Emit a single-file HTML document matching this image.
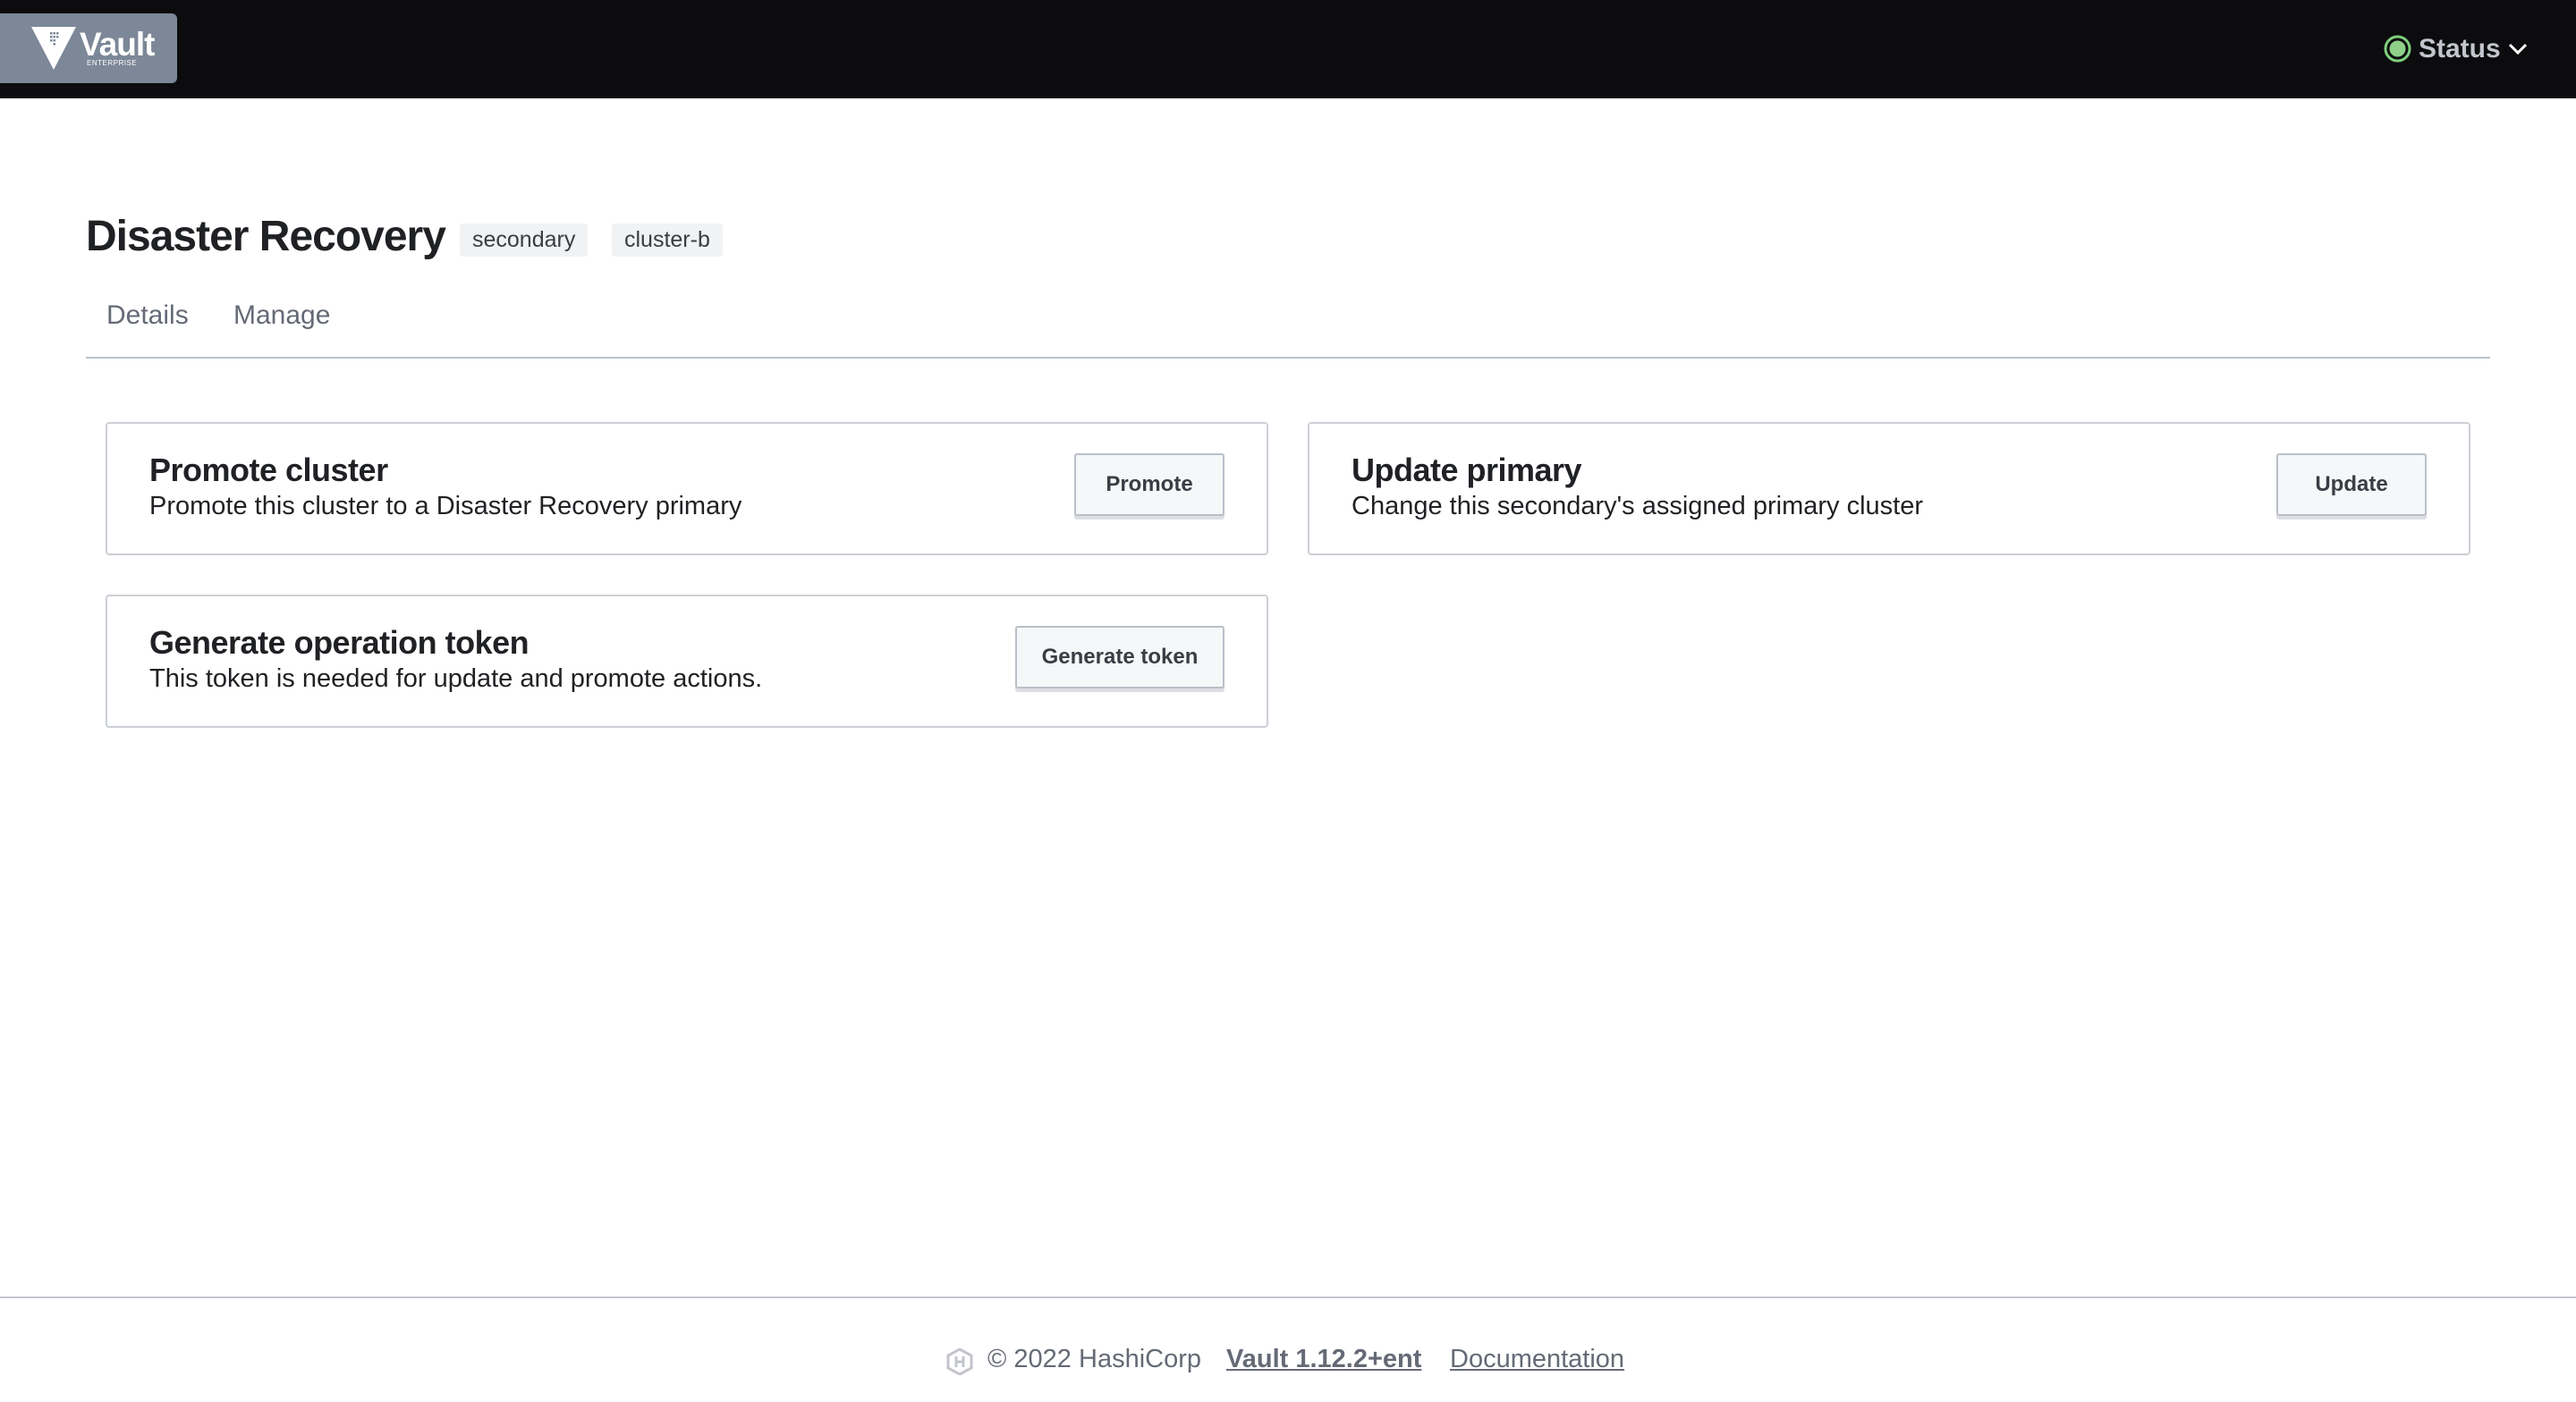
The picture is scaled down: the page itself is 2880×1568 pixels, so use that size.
<!DOCTYPE html>
<html><head><meta charset="utf-8"><style>
*{box-sizing:border-box;margin:0;padding:0}
html,body{width:2880px;height:1568px;background:#fff;font-family:"Liberation Sans",sans-serif;overflow:hidden;position:relative;color:#1f2124}
.hdr{position:absolute;left:0;top:0;width:2880px;height:110px;background:#0c0c0e}
.logo{position:absolute;left:0;top:15px;width:198px;height:78px;background:#7c8797;border-radius:0 6px 6px 0}
.abs{position:absolute;white-space:nowrap}
.badge{position:absolute;top:250px;height:37px;background:#f1f2f3;border-radius:4px;font-size:25px;color:#3b3d45;line-height:37px;padding:0 14px}
.card{position:absolute;width:1300px;height:149px;border:2px solid #ccd0d6;border-radius:4px;background:#fff}
.card h3{position:absolute;left:47px;top:31px;font-size:36px;font-weight:bold;letter-spacing:-0.5px}
.card p{position:absolute;left:47px;top:76px;font-size:29px;color:#1f2124}
.btn{position:absolute;top:33px;height:70px;border:2px solid #babfc8;border-radius:3px;background:#f6f7f8;font-size:24px;font-weight:bold;color:#3b3d45;line-height:66px;text-align:center;box-shadow:0 4px 0 #dcdee2}
</style></head><body>
<div class="hdr">
 <div class="logo">
  <svg class="abs" style="left:35px;top:15px" width="50" height="48" viewBox="0 0 50 48"><polygon points="0,0 50,0 25,48" fill="#fff"/><g fill="#7c8797"><rect x="21" y="6" width="2.5" height="2.5"/><rect x="24.5" y="6" width="2.5" height="2.5"/><rect x="28" y="6" width="2.5" height="2.5"/><rect x="21" y="10" width="2.5" height="2.5"/><rect x="24.5" y="10" width="2.5" height="2.5"/><rect x="28" y="10" width="2.5" height="2.5"/><rect x="21" y="14" width="2.5" height="2.5"/><rect x="24.5" y="14" width="2.5" height="2.5"/><rect x="24.5" y="18" width="2.5" height="2.5"/></g></svg>
  <div class="abs" style="left:89px;top:14px;font-size:37px;font-weight:bold;color:#fff;letter-spacing:-1px">Vault</div>
  <div class="abs" style="left:97px;top:51px;font-size:8px;color:#fff;letter-spacing:0.5px">ENTERPRISE</div>
 </div>
 <svg class="abs" style="left:2665px;top:39px" width="31" height="31" viewBox="0 0 31 31"><circle cx="15.5" cy="15.5" r="13.5" fill="none" stroke="#7fcf7c" stroke-width="3"/><circle cx="15.5" cy="15.5" r="9" fill="#8fcf89"/></svg>
 <div class="abs" style="left:2704px;top:38px;font-size:30px;font-weight:bold;color:#c2c5cc">Status</div>
 <svg class="abs" style="left:2804px;top:48px" width="22" height="14" viewBox="0 0 22 14"><polyline points="2,2 11,11 20,2" fill="none" stroke="#fff" stroke-width="3"/></svg>
</div>

<div class="abs" style="left:96px;top:237px;font-size:48px;font-weight:bold;letter-spacing:-1px;color:#1f2124">Disaster Recovery</div>
<div class="badge" style="left:514px">secondary</div>
<div class="badge" style="left:684px">cluster-b</div>
<div class="abs" style="left:119px;top:336px;font-size:30px;color:#656a76">Details</div>
<div class="abs" style="left:261px;top:336px;font-size:30px;color:#656a76">Manage</div>
<div class="abs" style="left:96px;top:399px;width:2688px;height:2px;background:#bac1cc"></div>

<div class="card" style="left:118px;top:472px"><h3>Promote cluster</h3><p>Promote this cluster to a Disaster Recovery primary</p><div class="btn" style="left:1081px;width:168px">Promote</div></div>
<div class="card" style="left:1462px;top:472px"><h3>Update primary</h3><p>Change this secondary's assigned primary cluster</p><div class="btn" style="left:1081px;width:168px">Update</div></div>
<div class="card" style="left:118px;top:665px"><h3>Generate operation token</h3><p>This token is needed for update and promote actions.</p><div class="btn" style="left:1015px;width:234px">Generate token</div></div>

<div class="abs" style="left:0;top:1450px;width:2880px;height:2px;background:#c2c7d0"></div>
<svg class="abs" style="left:1058px;top:1508px" width="30" height="30" viewBox="0 0 30 30"><polygon points="15,1 28,8 28,22 15,29 2,22 2,8" fill="none" stroke="#c2c5cc" stroke-width="3"/><path d="M11 9V21M19 9V21M11 15H19" stroke="#c2c5cc" stroke-width="3"/></svg>
<div class="abs" style="left:1104px;top:1504px;font-size:29px;color:#656a76">© 2022 HashiCorp</div>
<div class="abs" style="left:1371px;top:1504px;font-size:29px;font-weight:bold;color:#656a76;text-decoration:underline">Vault 1.12.2+ent</div>
<div class="abs" style="left:1621px;top:1504px;font-size:29px;color:#656a76;text-decoration:underline">Documentation</div>
</body></html>
